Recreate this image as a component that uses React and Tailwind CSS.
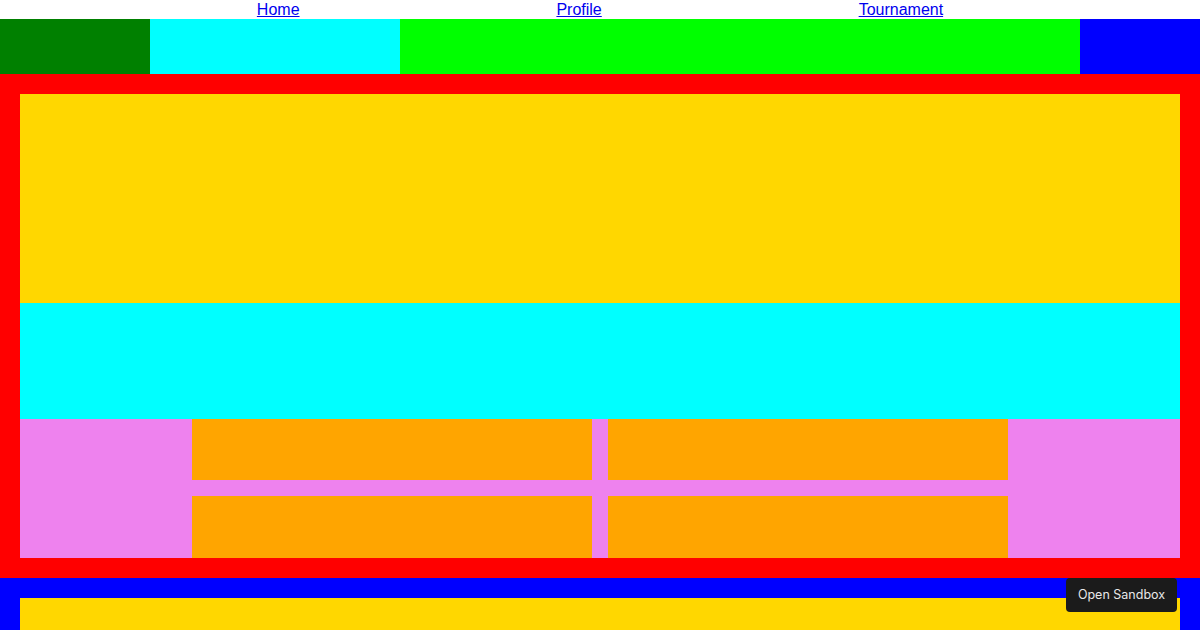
export default function App() {
  return (
    <div className="w-[1200px] h-[630px] overflow-hidden bg-white font-['Liberation_Sans',Arial,sans-serif] relative">
      <nav className="flex justify-evenly h-[19px] leading-[19px] text-base">
        <a href="#" className="text-[#0000ee] underline">Home</a>
        <a href="#" className="text-[#0000ee] underline">Profile</a>
        <a href="#" className="text-[#0000ee] underline">Tournament</a>
      </nav>
      <div className="flex h-[55px]">
        <div className="w-[150px] bg-[#008000]" />
        <div className="w-[250px] bg-[#00ffff]" />
        <div className="w-[680px] bg-[#00ff00]" />
        <div className="flex-1 bg-[#0000ff]" />
      </div>
      <div className="bg-[#ff0000] p-5">
        <div className="h-[209px] bg-[#ffd700]" />
        <div className="h-[116px] bg-[#00ffff]" />
        <div className="bg-[#ee82ee] flex justify-center">
          <div className="grid grid-cols-[400px_400px] gap-4">
            <div className="h-[61px] bg-[#ffa500]" />
            <div className="h-[61px] bg-[#ffa500]" />
            <div className="h-[62px] bg-[#ffa500]" />
            <div className="h-[62px] bg-[#ffa500]" />
          </div>
        </div>
      </div>
      <div className="bg-[#0000ff] px-5 pt-5">
        <div className="h-[200px] bg-[#ffd700]" />
      </div>
      <button className="absolute left-[1066px] top-[578px] w-[111px] h-[34px] rounded-[4px] bg-[#1b1b1b] text-[#e8e8e8] text-[12.5px] font-['Inter',sans-serif]">
        Open Sandbox
      </button>
    </div>
  );
}
